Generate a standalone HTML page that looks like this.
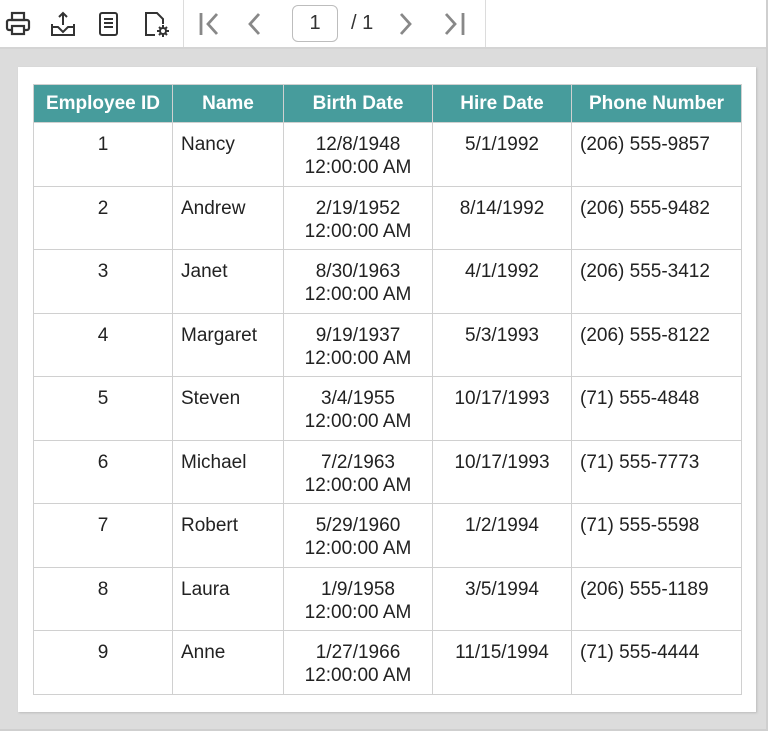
<!DOCTYPE html>
<html><head><style>
*{margin:0;padding:0;box-sizing:border-box}
body{width:768px;height:731px;background:#dcdcdc;font-family:"Liberation Sans","DejaVu Sans",sans-serif;position:relative;overflow:hidden;border-right:2px solid #cfcfcf;border-bottom:2px solid #cfcfcf}
#tb{position:absolute;left:0;top:0;width:766px;height:49px;background:#fff;border-bottom:2px solid #d4d4d4}
.sep{position:absolute;top:0;width:1px;height:47px;background:#dcdcdc}
.ic{position:absolute;top:10px}
#pg{position:absolute;left:292px;top:5px;width:46px;height:37px;border:1px solid #bdbdbd;border-radius:6px;text-align:center;line-height:35px;font-size:20px;color:#333}
#of{position:absolute;left:351px;top:12px;font-size:20px;color:#333}
#page{position:absolute;left:18px;top:67px;width:738px;height:645px;background:#fff;box-shadow:1px 1px 2px #bbb}
table{position:absolute;left:15px;top:17px;border-collapse:collapse;font-size:19px;color:#222}
th{background:#479c9c;color:#fff;font-weight:bold;height:38px;border:1px solid #d0d0d0;font-size:19px;white-space:nowrap}
td{border:1px solid #d0d0d0;height:63.5px;vertical-align:top;padding-top:10px;line-height:23px;white-space:nowrap}
td.c{text-align:center}td.l{padding-left:8px}
</style></head><body>
<div id="tb">
<svg class="ic" style="left:4px" width="28" height="28" viewBox="0 0 28 28" fill="none" stroke="#333" stroke-width="2.2"><rect x="8" y="3" width="12" height="7"/><rect x="3" y="10" width="22" height="10" rx="2"/><rect x="8" y="16" width="12" height="8" fill="#fff"/></svg>
<svg class="ic" style="left:49px" width="28" height="28" viewBox="0 0 28 28" fill="none" stroke="#333" stroke-width="2"><path d="M14 3v12M10 7l4-4 4 4M3 14v11h22V14M3 17h6l5 5 5-5h6"/></svg>
<svg class="ic" style="left:95px" width="28" height="28" viewBox="0 0 28 28" fill="none" stroke="#333" stroke-width="2"><rect x="5" y="3" width="17" height="22" rx="2"/><path d="M9 9h9M9 13h9M9 17h9"/></svg>
<svg class="ic" style="left:142px" width="30" height="28" viewBox="0 0 30 28" fill="none" stroke="#333" stroke-width="2"><path d="M13 25H4V3h11l6 6v5"/><circle cx="21" cy="21" r="3"/><path d="M21 15v3M21 24v3M15 21h3M24 21h3M17 17l2 2M23 23l2 2M25 17l-2 2M17 25l2-2"/></svg>
<div class="sep" style="left:183px"></div>
<svg class="ic" style="left:196px" width="28" height="28" viewBox="0 0 28 28" fill="none" stroke="#888" stroke-width="2.8"><path d="M5 3v22M21 4l-9 10 9 10"/></svg>
<svg class="ic" style="left:240px" width="28" height="28" viewBox="0 0 28 28" fill="none" stroke="#888" stroke-width="2.8"><path d="M19 4l-9 10 9 10"/></svg>
<div id="pg">1</div><div id="of">/ 1</div>
<svg class="ic" style="left:392px" width="28" height="28" viewBox="0 0 28 28" fill="none" stroke="#888" stroke-width="2.8"><path d="M9 4l9 10-9 10"/></svg>
<svg class="ic" style="left:440px" width="28" height="28" viewBox="0 0 28 28" fill="none" stroke="#888" stroke-width="2.8"><path d="M6 4l9 10-9 10M23 3v22"/></svg>
<div class="sep" style="left:485px"></div>
</div>
<div id="page"><table>
<colgroup><col style="width:139px"><col style="width:111px"><col style="width:149px"><col style="width:139px"><col style="width:170px"></colgroup>
<tr><th>Employee ID</th><th>Name</th><th>Birth Date</th><th>Hire Date</th><th>Phone Number</th></tr>
<tr><td class="c">1</td><td class="l">Nancy</td><td class="c">12/8/1948<br>12:00:00 AM</td><td class="c">5/1/1992</td><td class="l">(206) 555-9857</td></tr>
<tr><td class="c">2</td><td class="l">Andrew</td><td class="c">2/19/1952<br>12:00:00 AM</td><td class="c">8/14/1992</td><td class="l">(206) 555-9482</td></tr>
<tr><td class="c">3</td><td class="l">Janet</td><td class="c">8/30/1963<br>12:00:00 AM</td><td class="c">4/1/1992</td><td class="l">(206) 555-3412</td></tr>
<tr><td class="c">4</td><td class="l">Margaret</td><td class="c">9/19/1937<br>12:00:00 AM</td><td class="c">5/3/1993</td><td class="l">(206) 555-8122</td></tr>
<tr><td class="c">5</td><td class="l">Steven</td><td class="c">3/4/1955<br>12:00:00 AM</td><td class="c">10/17/1993</td><td class="l">(71) 555-4848</td></tr>
<tr><td class="c">6</td><td class="l">Michael</td><td class="c">7/2/1963<br>12:00:00 AM</td><td class="c">10/17/1993</td><td class="l">(71) 555-7773</td></tr>
<tr><td class="c">7</td><td class="l">Robert</td><td class="c">5/29/1960<br>12:00:00 AM</td><td class="c">1/2/1994</td><td class="l">(71) 555-5598</td></tr>
<tr><td class="c">8</td><td class="l">Laura</td><td class="c">1/9/1958<br>12:00:00 AM</td><td class="c">3/5/1994</td><td class="l">(206) 555-1189</td></tr>
<tr><td class="c">9</td><td class="l">Anne</td><td class="c">1/27/1966<br>12:00:00 AM</td><td class="c">11/15/1994</td><td class="l">(71) 555-4444</td></tr>
</table></div>
</body></html>
